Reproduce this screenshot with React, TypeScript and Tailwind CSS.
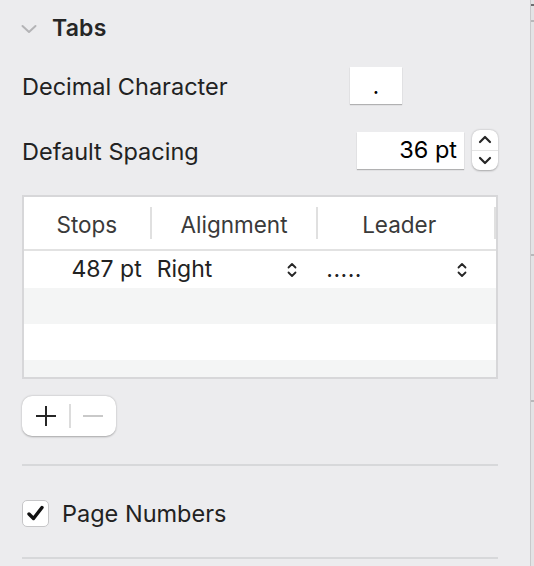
import React from "react";

function UpDown({ className = "" }: { className?: string }) {
  return (
    <svg width="10" height="16" viewBox="0 0 10 16" className={className}>
      <path d="M1.5 5.5 L5 2 L8.5 5.5" fill="none" stroke="#262626" strokeWidth="1.8" strokeLinecap="round" strokeLinejoin="round" />
      <path d="M1.5 10.5 L5 14 L8.5 10.5" fill="none" stroke="#262626" strokeWidth="1.8" strokeLinecap="round" strokeLinejoin="round" />
    </svg>
  );
}

export default function App() {
  return (
    <div
      className="w-[534px] h-[566px] bg-[#ececee] flex overflow-hidden text-[#222222]"
      style={{ fontFamily: "Inter, 'Open Sans', 'Liberation Sans', sans-serif" }}
    >
      <div className="w-[530px] flex flex-col pl-[22px] pr-[32px]">
        {/* section header */}
        <div className="h-[56px] flex items-center">
          <svg width="16" height="10" viewBox="0 0 16 10" className="ml-[-1px] mt-[2px]">
            <path d="M1.5 2 L8 8 L14.5 2" fill="none" stroke="#b4b4b6" strokeWidth="2" strokeLinecap="round" strokeLinejoin="round" />
          </svg>
          <span className="ml-[15px] text-[23px] font-semibold tracking-[0.2px] text-[#262626]">Tabs</span>
        </div>

        {/* Decimal Character */}
        <div className="mt-[11px] h-[37px] flex items-center">
          <span className="flex-1 text-[23.5px] mt-[3px]">Decimal Character</span>
          <div className="w-[52px] h-[37px] bg-white shadow-[0_1px_1px_rgba(0,0,0,0.25)] flex items-center justify-center text-[22px] text-black mr-[96px]">
            <span className="mt-[2px] text-black">.</span>
          </div>
        </div>

        {/* Default Spacing */}
        <div className="mt-[26px] h-[40px] flex items-center">
          <span className="flex-1 text-[23.5px] mt-[3px]">Default Spacing</span>
          <div className="w-[107px] h-[37px] bg-white shadow-[0_1px_1px_rgba(0,0,0,0.25)] flex items-center justify-end pr-[7px] text-[23.5px] text-black">
            36 pt
          </div>
          <div className="ml-[8px] w-[26px] h-[40px] bg-white rounded-[8px] shadow-[0_0.5px_2px_rgba(0,0,0,0.3)] flex flex-col">
            <div className="flex-1 flex items-center justify-center border-b border-[#e4e4e4]">
              <svg width="14" height="9" viewBox="0 0 14 9">
                <path d="M2 7 L7 2 L12 7" fill="none" stroke="#262626" strokeWidth="2.2" strokeLinecap="round" strokeLinejoin="round" />
              </svg>
            </div>
            <div className="flex-1 flex items-center justify-center">
              <svg width="14" height="9" viewBox="0 0 14 9">
                <path d="M2 2 L7 7 L12 2" fill="none" stroke="#262626" strokeWidth="2.2" strokeLinecap="round" strokeLinejoin="round" />
              </svg>
            </div>
          </div>
        </div>

        {/* Table */}
        <div className="mt-[25px] h-[184px] border-2 border-[#d7d7d9] bg-white flex flex-col overflow-hidden">
          <div className="h-[54px] flex items-center border-b-2 border-[#e2e2e2] text-[22.5px] text-[#3a3a3a]">
            <div className="w-[126px] text-center mt-[3px]">Stops</div>
            <div className="w-[2px] h-[32px] bg-[#e0e0e0]" />
            <div className="w-[165px] text-center mt-[3px]">Alignment</div>
            <div className="w-[2px] h-[32px] bg-[#e0e0e0]" />
            <div className="w-[176px] text-center pr-[14px] mt-[3px]">Leader</div>
            <div className="w-[2px] h-[32px] bg-[#e0e0e0]" />
          </div>
          <div className="h-[37px] flex items-center text-[23px] bg-white">
            <div className="w-[128px] text-right pr-[10px]">487 pt</div>
            <div className="w-[167px] flex items-center pl-[5px] pr-[21px]">
              <span className="flex-1">Right</span>
              <UpDown />
            </div>
            <div className="w-[178px] flex items-center pl-[8px] pr-[29px]">
              <span className="flex-1 tracking-[0.5px]">.....</span>
              <UpDown />
            </div>
          </div>
          <div className="h-[36px] bg-[#f4f5f5]" />
          <div className="h-[36px] bg-white" />
          <div className="flex-1 bg-[#f4f5f5]" />
        </div>

        {/* + / - */}
        <div className="mt-[17px] w-[94px] h-[40px] bg-white rounded-[10px] shadow-[0_0.5px_2px_rgba(0,0,0,0.3)] flex items-center">
          <div className="w-[47px] flex items-center justify-center">
            <svg width="22" height="22" viewBox="0 0 22 22">
              <path d="M11 1 V21 M1 11 H21" stroke="#262626" strokeWidth="2" />
            </svg>
          </div>
          <div className="w-[1.5px] h-[24px] bg-[#dcdcdc]" />
          <div className="flex-1 flex items-center justify-center">
            <svg width="22" height="4" viewBox="0 0 22 4">
              <path d="M1 2 H21" stroke="#c9c9c9" strokeWidth="2" />
            </svg>
          </div>
        </div>

        <div className="mt-[28px] h-[2px] bg-[#d7d8da]" />

        {/* Page Numbers */}
        <div className="mt-[34px] h-[27px] flex items-center">
          <div className="w-[27px] h-[27px] bg-white rounded-[5px] border border-[#c6c6c8] flex items-center justify-center">
            <svg width="19" height="17" viewBox="0 0 19 17">
              <path d="M3 9 L7.5 13.5 L16 2.5" fill="none" stroke="#111" strokeWidth="3.4" strokeLinecap="round" strokeLinejoin="round" />
            </svg>
          </div>
          <span className="ml-[13px] text-[23.5px]">Page Numbers</span>
        </div>

        <div className="mt-[30px] h-[2px] bg-[#d7d8da]" />
      </div>

      {/* right edge strip */}
      <div className="relative w-[4px] h-full border-l border-[#c9c9cb] bg-[#e3e3e5]">
        <div className="absolute left-0 top-[4px] w-[3px] h-[2px] bg-[#6e6e70]" />
        <div className="absolute left-0 top-[20px] w-[3px] h-[2px] bg-[#b8b8ba]" />
        <div className="absolute left-0 top-[254px] w-[3px] h-[2px] bg-[#b8b8ba]" />
        <div className="absolute left-0 top-[400px] w-[3px] h-[2px] bg-[#b8b8ba]" />
      </div>
    </div>
  );
}
